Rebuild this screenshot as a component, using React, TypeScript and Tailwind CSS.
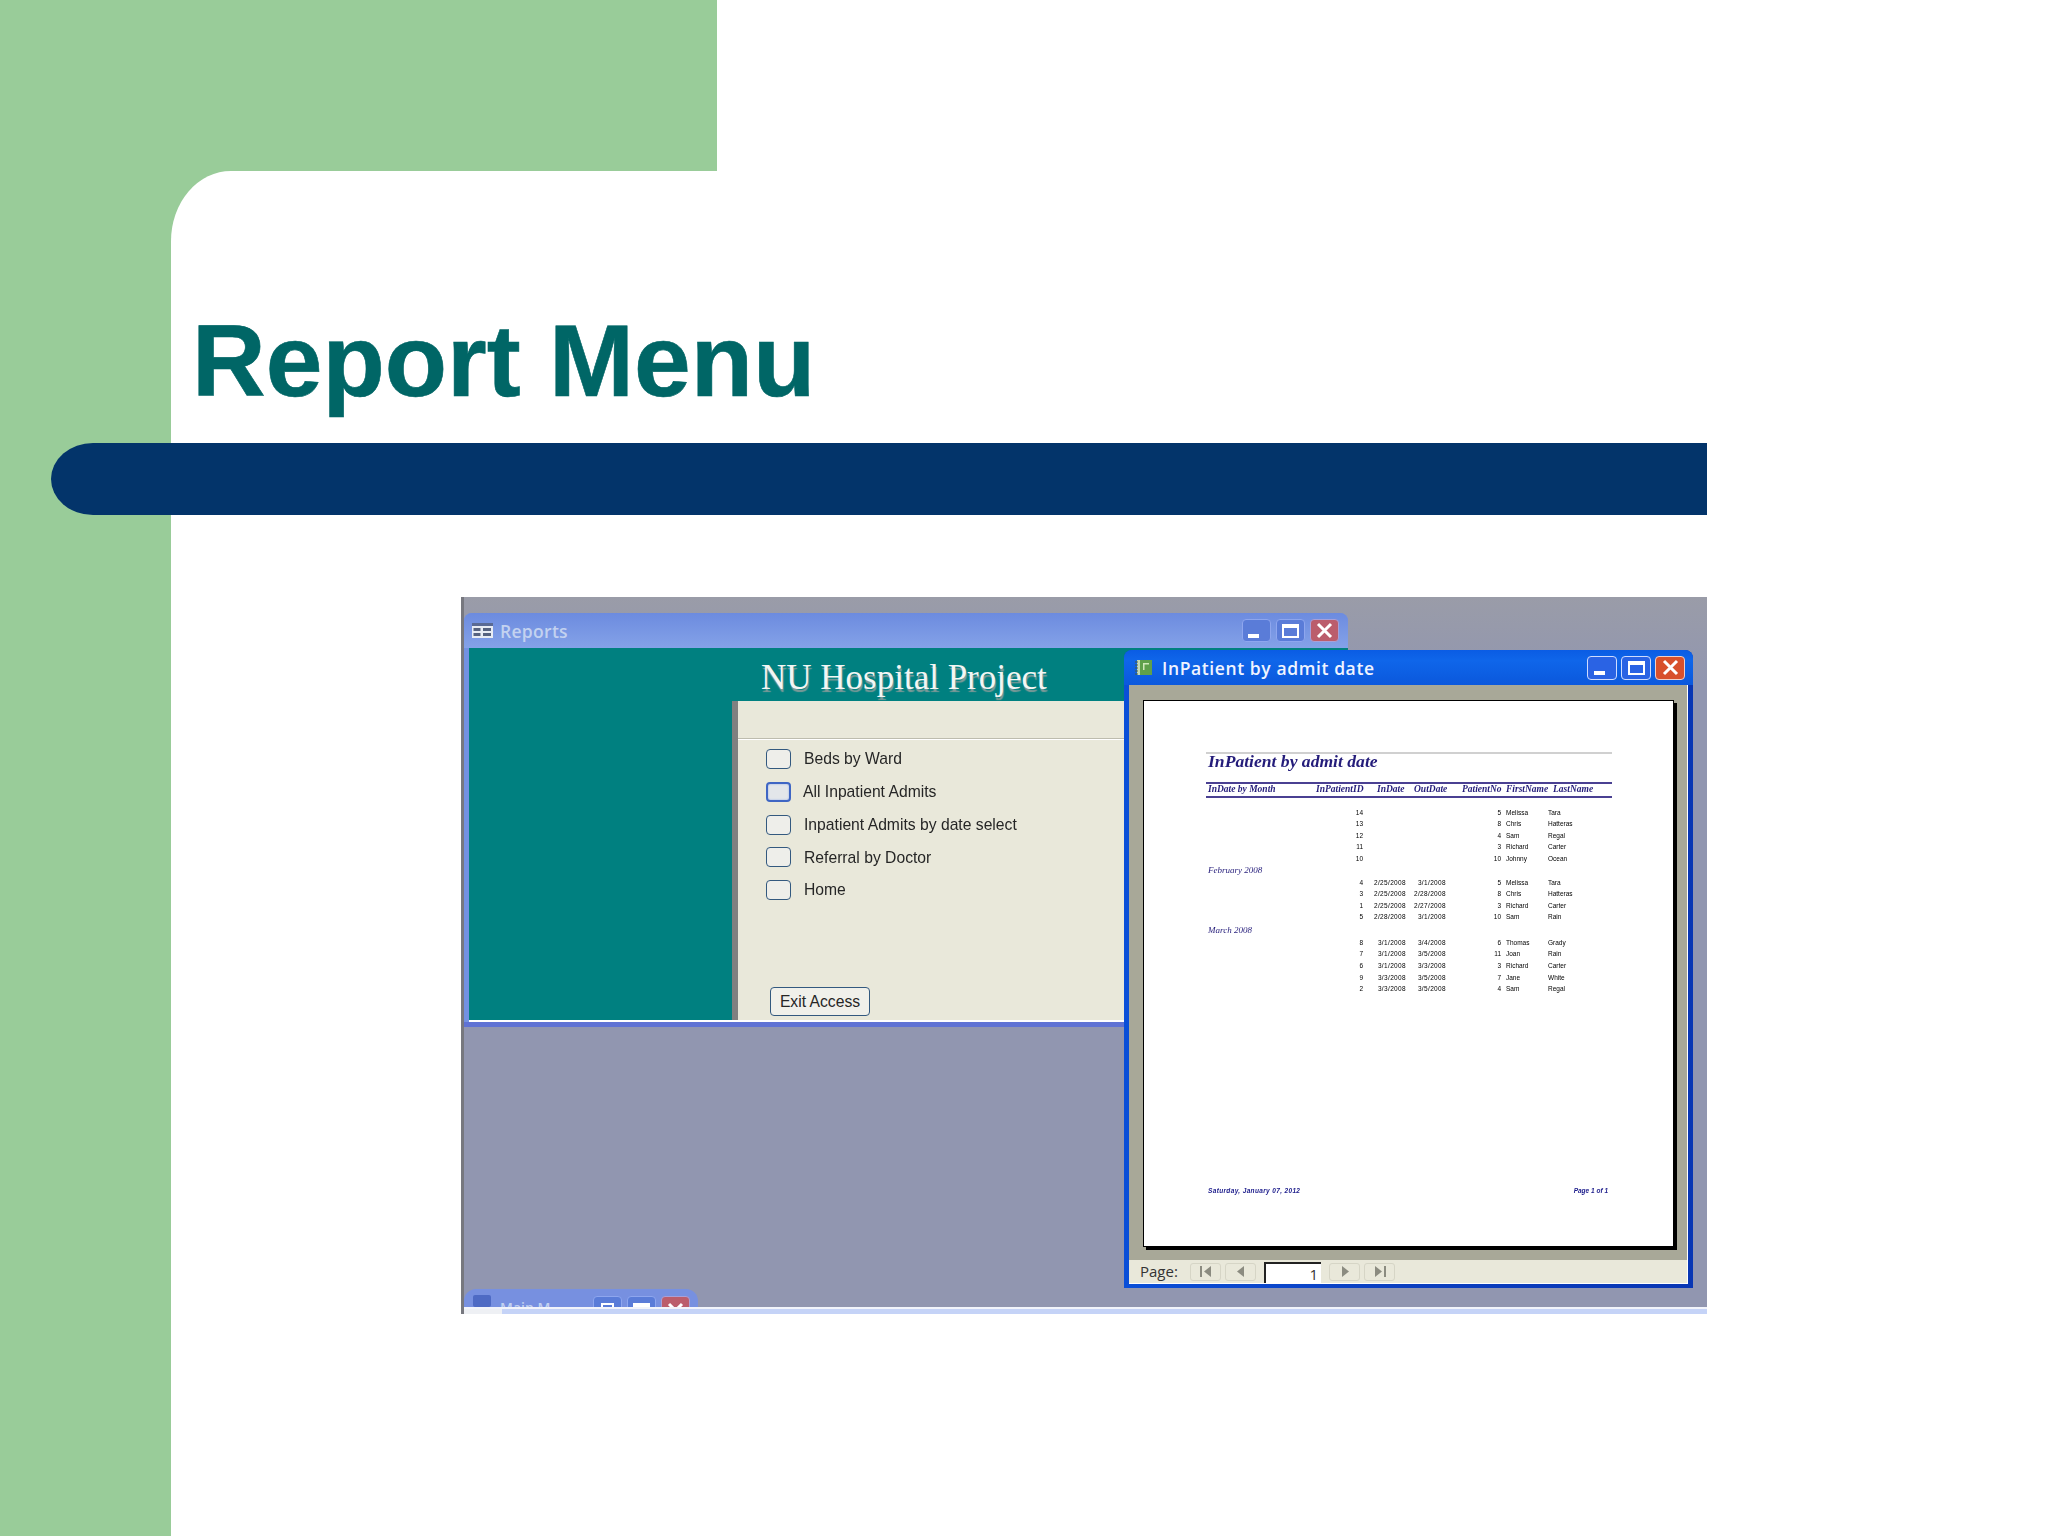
import React from "react";

const rows1 = [
  ["14", "", "", "5", "Melissa", "Tara"],
  ["13", "", "", "8", "Chris", "Hatteras"],
  ["12", "", "", "4", "Sam", "Regal"],
  ["11", "", "", "3", "Richard", "Carter"],
  ["10", "", "", "10", "Johnny", "Ocean"],
];
const rows2 = [
  ["4", "2/25/2008", "3/1/2008", "5", "Melissa", "Tara"],
  ["3", "2/25/2008", "2/28/2008", "8", "Chris", "Hatteras"],
  ["1", "2/25/2008", "2/27/2008", "3", "Richard", "Carter"],
  ["5", "2/28/2008", "3/1/2008", "10", "Sam", "Rain"],
];
const rows3 = [
  ["8", "3/1/2008", "3/4/2008", "6", "Thomas", "Grady"],
  ["7", "3/1/2008", "3/5/2008", "11", "Joan", "Rain"],
  ["6", "3/1/2008", "3/3/2008", "3", "Richard", "Carter"],
  ["9", "3/3/2008", "3/5/2008", "7", "Jane", "White"],
  ["2", "3/3/2008", "3/5/2008", "4", "Sam", "Regal"],
];

function DataRows({ rows }: { rows: string[][] }) {
  return (
    <>
      {rows.map((r, i) => (
        <div
          key={i}
          className="grid grid-cols-[157px_43px_40px_55px_47px_auto] h-[11.6px] items-center text-[6.5px] leading-none text-black font-['Liberation_Sans',sans-serif] blur-[0.4px]"
        >
          <span className="text-right">{r[0]}</span>
          <span className="text-right tracking-[0.35px] whitespace-nowrap">{r[1]}</span>
          <span className="text-right tracking-[0.35px] whitespace-nowrap">{r[2]}</span>
          <span className="text-right">{r[3]}</span>
          <span className="pl-[5px]">{r[4]}</span>
          <span>{r[5]}</span>
        </div>
      ))}
    </>
  );
}

function MinGlyph() {
  return <span className="mt-[10px] -ml-[6px] w-[11px] h-[4px] bg-white block" />;
}
function MaxGlyph() {
  return <span className="w-[17px] h-[14px] border-2 border-t-[4px] border-white block" />;
}
function CloseGlyph() {
  return (
    <svg width="17" height="17" viewBox="0 0 17 17">
      <path d="M2 2 L15 15 M15 2 L2 15" stroke="white" strokeWidth="3" />
    </svg>
  );
}

function FormIcon() {
  return (
    <svg width="21" height="15" viewBox="0 0 21 15">
      <rect width="21" height="15" fill="#e8ecf4" />
      <rect width="21" height="3" fill="#5a6a94" />
      <rect x="1.500" y="5" width="7" height="3" fill="#56627f" />
      <rect x="1.500" y="10" width="7" height="3" fill="#56627f" />
      <rect x="11" y="5" width="8" height="3" fill="#56627f" />
      <rect x="11" y="10" width="8" height="3" fill="#56627f" />
    </svg>
  );
}

function BookIcon() {
  return (
    <svg width="17" height="17" viewBox="0 0 17 17">
      <rect x="2" y="1" width="15" height="15" fill="#5fa04a" />
      <rect x="2" y="1" width="3" height="15" fill="#c4d8b4" />
      <rect x="8" y="4" width="6" height="1.500" fill="#cfe8b8" />
      <rect x="8" y="4" width="1.500" height="7" fill="#cfe8b8" />
      <path d="M0 3h3M0 6h3M0 9h3M0 12h3M0 15h3" stroke="#4a5a40" strokeWidth="1" />
    </svg>
  );
}

function NavButton({ d }: { d: string }) {
  return (
    <span className="w-[31px] h-[18px] rounded-[3px] border border-[#d6d5c6] bg-[#e9e8da] flex items-center justify-center">
      <svg width="14" height="13" viewBox="0 0 14 13">
        <path d={d} fill="#8b8b80" />
      </svg>
    </span>
  );
}

function MenuRow({ label, focused }: { label: string; focused?: boolean }) {
  return (
    <div className="flex items-center h-[20px] gap-[13px]">
      <span
        className={
          focused
            ? "w-[25px] h-[20px] rounded-[4px] border-2 border-[#3f66c4] bg-[#e3e6ea] shadow-[inset_0_0_2px_#8fa8e8]"
            : "w-[25px] h-[20px] rounded-[4px] border-[1.5px] border-[#33597f] bg-[#eeeeea]"
        }
      />
      <span
        className={
          focused
            ? "-ml-px text-[15.7px] leading-none text-[#262626] font-['Liberation_Sans',sans-serif] whitespace-nowrap blur-[0.2px]"
            : "text-[15.7px] leading-none text-[#262626] font-['Liberation_Sans',sans-serif] whitespace-nowrap blur-[0.2px]"
        }
      >
        {label}
      </span>
    </div>
  );
}

export default function App() {
  return (
    <div className="w-[2048px] h-[1536px] bg-white flex flex-col overflow-hidden">
      <div className="h-[171px] w-[717px] bg-[#99cc99] shrink-0" />
      <div className="flex flex-1">
        <div className="w-[171px] bg-[#99cc99] shrink-0" />
        <div className="flex-1 bg-[linear-gradient(#99cc99,#99cc99)] bg-no-repeat bg-[length:80px_80px]">
          <div className="h-full bg-white rounded-tl-[60px_70px] flex flex-col">
            <div className="h-[272px] flex items-end pb-[31px] pl-[21px] shrink-0">
              <h1 className="text-[102px] leading-none font-bold text-[#006666] [-webkit-text-stroke:0.6px_#006666] font-['Liberation_Sans',sans-serif] whitespace-nowrap">
                Report Menu
              </h1>
            </div>
            <div className="h-[72px] w-[1656px] -ml-[120px] bg-[#03346a] rounded-l-[42px_36px] shrink-0" />
            <div className="mt-[82px] ml-[290px] w-[1246px] h-[717px] relative overflow-hidden border-l-[3px] border-[#77787f] bg-[linear-gradient(#9a9ca8,#9196b0_12%)]">
              {/* Reports window */}
              <div className="absolute left-0 top-[16px] w-[884px] h-[414px] rounded-t-[8px] bg-[#7291e2] flex flex-col">
                <div className="h-[35px] flex items-center pl-[8px] shrink-0 bg-[linear-gradient(#6c8bdf,#84a2e8)] rounded-t-[8px]">
                  <FormIcon />
                  <span className="ml-[7px] mt-[2px] text-[17.5px] font-semibold text-[#c3d2f0] font-['Open_Sans',sans-serif] tracking-[0.3px]">
                    Reports
                  </span>
                  <span className="ml-auto mr-[9px] flex gap-[5px]">
                    <span className="w-[29px] h-[23px] rounded-[4px] border border-[#8ea6ee] bg-[#5a7cd8] flex items-center justify-center">
                      <MinGlyph />
                    </span>
                    <span className="w-[29px] h-[23px] rounded-[4px] border border-[#8ea6ee] bg-[#5a7cd8] flex items-center justify-center">
                      <MaxGlyph />
                    </span>
                    <span className="w-[29px] h-[23px] rounded-[4px] border border-[#a8a0d8] bg-[#bb5d6c] flex items-center justify-center">
                      <CloseGlyph />
                    </span>
                  </span>
                </div>
                <div className="flex-1 ml-[5px] flex border-b-[2px] border-white">
                  <div className="w-[263px] bg-[#008080] shrink-0" />
                  <div className="flex-1 flex flex-col">
                    <div className="h-[53px] bg-[#008080] pl-[29px] pt-[12px] shrink-0">
                      <span className="text-[35px] leading-none text-[#f2f6f4] font-['Liberation_Serif',serif] whitespace-nowrap [text-shadow:1px_3px_1px_#7f9a98] block">
                        NU Hospital Project
                      </span>
                    </div>
                    <div className="flex-1 bg-[#e9e8da] border-l-[6px] border-[#808080] flex flex-col">
                      <div className="h-[38px] border-b border-[#bdbcae] shadow-[0_1px_0_#ffffff] shrink-0" />
                      <div className="pt-[10px] pl-[28px] flex flex-col gap-[12.8px]">
                        <MenuRow label="Beds by Ward" />
                        <MenuRow label="All Inpatient Admits" focused />
                        <MenuRow label="Inpatient Admits by date select" />
                        <MenuRow label="Referral by Doctor" />
                        <MenuRow label="Home" />
                      </div>
                      <button className="mt-[87px] ml-[32px] w-[100px] h-[29px] rounded-[4px] border-[1.5px] border-[#33597f] bg-[#f0f0ea] text-[15.7px] leading-none text-[#262626] font-['Liberation_Sans',sans-serif]">
                        Exit Access
                      </button>
                    </div>
                  </div>
                </div>
                <div className="h-[5px] bg-[#5f72d4] shrink-0" />
              </div>

              {/* InPatient window */}
              <div className="absolute left-[660px] top-[53px] w-[569px] h-[638px] rounded-t-[8px] bg-[linear-gradient(90deg,#0a4fd8,#0b3fc0_50%,#0836b4)] flex flex-col">
                <div className="h-[35px] flex items-center pl-[11px] shrink-0 rounded-t-[8px] bg-[linear-gradient(#0a5ce4,#0f66ea_30%,#0b58dc)]">
                  <BookIcon />
                  <span className="ml-[10px] mt-[1px] text-[17.5px] font-semibold text-[#f0f4ff] font-['Open_Sans',sans-serif] tracking-[0.6px] whitespace-nowrap">
                    InPatient by admit date
                  </span>
                  <span className="ml-auto mr-[8px] flex gap-[4px]">
                    <span className="w-[30px] h-[24px] rounded-[4px] border border-[#cfdcff] bg-[#2a63e4] flex items-center justify-center">
                      <MinGlyph />
                    </span>
                    <span className="w-[30px] h-[24px] rounded-[4px] border border-[#cfdcff] bg-[#2a63e4] flex items-center justify-center">
                      <MaxGlyph />
                    </span>
                    <span className="w-[30px] h-[24px] rounded-[4px] border border-[#f0d0c8] bg-[#d8502c] flex items-center justify-center">
                      <CloseGlyph />
                    </span>
                  </span>
                </div>
                <div className="flex-1 mx-[5px] mb-[5px] flex flex-col border-r border-b border-white">
                  <div className="flex-1 bg-[#a8a898] pl-[14px] pt-[15px] pb-[13px]">
                    <div className="w-[531px] h-[547px] bg-white border border-black shadow-[3px_3px_0_#000000] flex flex-col pl-[62px] pt-[51px]">
                      <div className="w-[406px] border-t-2 border-[#d0d0d0] h-[30px] pl-[2px]">
                        <span className="-mt-[1px] text-[17.6px] leading-none font-bold italic text-[#241c7a] font-['Liberation_Serif',serif] whitespace-nowrap blur-[0.3px] block">
                          InPatient by admit date
                        </span>
                      </div>
                      <div className="w-[406px] h-[16px] border-y-2 border-[#4a4092] pl-[2px] grid grid-cols-[108px_61px_37px_48px_44px_47px_auto] items-center text-[9.5px] leading-none font-bold italic text-[#241c7a] font-['Liberation_Serif',serif] whitespace-nowrap">
                        <span className="blur-[0.4px]">InDate by Month</span>
                        <span className="blur-[0.4px]">InPatientID</span>
                        <span className="blur-[0.4px]">InDate</span>
                        <span className="blur-[0.4px]">OutDate</span>
                        <span className="blur-[0.4px]">PatientNo</span>
                        <span className="blur-[0.4px]">FirstName</span>
                        <span className="blur-[0.4px]">LastName</span>
                      </div>
                      <div className="pt-[9px]">
                        <DataRows rows={rows1} />
                        <div className="h-[12px] pl-[2px] flex items-center text-[9px] leading-none italic text-[#241c7a] font-['Liberation_Serif',serif] blur-[0.35px]">
                          February 2008
                        </div>
                        <DataRows rows={rows2} />
                        <div className="h-[14px] pl-[2px] flex items-center text-[9px] leading-none italic text-[#241c7a] font-['Liberation_Serif',serif] blur-[0.35px]">
                          March 2008
                        </div>
                        <DataRows rows={rows3} />
                      </div>
                      <div className="mt-auto mb-[52px] w-[402px] pl-[2px] flex justify-between text-[6.5px] leading-none font-bold italic text-[#1a1a8a] font-['Liberation_Sans',sans-serif] blur-[0.25px]">
                        <span className="tracking-[0.35px]">Saturday, January 07, 2012</span>
                        <span>Page 1 of 1</span>
                      </div>
                    </div>
                  </div>
                  <div className="h-[23px] bg-[#e9e8da] flex items-center pl-[11px] shrink-0 overflow-hidden">
                    <span className="w-[50px] text-[15px] leading-none text-[#333333] font-['Open_Sans',sans-serif]">Page:</span>
                    <span className="flex gap-[4px]">
                      <NavButton d="M1 1h2v11H1zM12 1v11L5 6.500z" />
                      <NavButton d="M10 1v11L3 6.500z" />
                    </span>
                    <span className="ml-[8px] w-[57px] h-[23px] mt-[3px] bg-white border-t-2 border-l-2 border-[#222222] text-right pr-[3px] text-[15px] leading-[20px] text-[#333333] font-['Open_Sans',sans-serif]">
                      1
                    </span>
                    <span className="ml-[8px] flex gap-[4px]">
                      <NavButton d="M4 1v11l7-5.500z" />
                      <NavButton d="M2 1v11l7-5.500zM11 1h2v11h-2z" />
                    </span>
                  </div>
                </div>
              </div>

              {/* Minimized window */}
              <div className="absolute left-0 top-[692px] w-[234px] h-[18px] rounded-t-[12px] bg-[#7790e0] flex items-start pl-[9px] pt-[6px] overflow-hidden">
                <span className="w-[18px] h-[12px] rounded-[2px] bg-[#4e6ac4] block" />
                <span className="ml-[9px] mt-[6px] text-[14px] leading-none font-semibold text-[#c3d2f0] font-['Open_Sans',sans-serif]">Main M</span>
                <span className="ml-auto mr-[8px] mt-[1px] flex gap-[5px]">
                  <span className="w-[29px] h-[20px] rounded-[4px] border border-[#8ea6ee] bg-[#5a7cd8] flex justify-center pt-[6px]">
                    <span className="w-[13px] h-[12px] border-2 border-white block" />
                  </span>
                  <span className="w-[29px] h-[20px] rounded-[4px] border border-[#8ea6ee] bg-[#5a7cd8] flex justify-center pt-[6px]">
                    <span className="w-[17px] h-[12px] border-2 border-t-[4px] border-white block" />
                  </span>
                  <span className="w-[29px] h-[20px] rounded-[4px] border border-[#a8a0d8] bg-[#bb5d6c] flex justify-center pt-[5px]">
                    <CloseGlyph />
                  </span>
                </span>
              </div>

              {/* Bottom strip */}
              <div className="absolute left-0 right-0 bottom-0 h-[7px] border-t-2 border-[#f2f4fb] bg-[#c5d3f7] flex">
                <span className="w-[38px] bg-[#eef0f4] block" />
              </div>
            </div>
          </div>
        </div>
      </div>
    </div>
  );
}
